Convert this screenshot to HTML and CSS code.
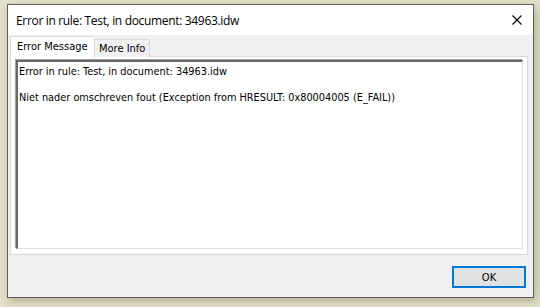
FILE: index.html
```html
<!DOCTYPE html>
<html>
<head>
<meta charset="utf-8">
<link rel="stylesheet" href="styles.css">
</head>
<body>
<div class="window">
  <div class="titlebar">
    <span class="title">Error in rule: Test, in document: 34963.idw</span>
    <svg class="close" width="10" height="10" viewBox="0 0 10 10"><path d="M0.5 0.5 L9.5 9.5 M9.5 0.5 L0.5 9.5" stroke="#000" stroke-width="1.1" fill="none"/></svg>
  </div>
  <div class="content">
    <div class="tabs">
      <div class="tab active">Error Message</div>
      <div class="tab">More Info</div>
    </div>
    <div class="panel">
      <div class="textbox">
        <div class="line">Error in rule: Test, in document: 34963.idw</div>
        <div class="line blank"></div>
        <div class="line">Niet nader omschreven fout (Exception from HRESULT: 0x80004005 (E_FAIL))</div>
      </div>
    </div>
    <div class="footer">
      <button class="ok">OK</button>
    </div>
  </div>
</div>
</body>
</html>
```
FILE: styles.css
```css
html, body {
  margin: 0;
  padding: 0;
}
body {
  background: #e2e0c9;
  width: 540px;
  height: 307px;
  overflow: hidden;
  padding: 4px 0 0 7px;
  box-sizing: border-box;
}
.window {
  width: 527px;
  height: 294px;
  box-sizing: border-box;
  border: 1px solid #5f5f5f;
  background: #f0f0f0;
  box-shadow: 2px 3px 8px rgba(90, 90, 40, 0.35);
  display: flex;
  flex-direction: column;
  font-family: "Open Sans", "Noto Sans", sans-serif;
}
.titlebar {
  height: 30px;
  background: #fff;
  display: flex;
  align-items: center;
  justify-content: space-between;
  padding: 0 11px 0 8px;
  flex-shrink: 0;
}
.title {
  font-size: 12px;
  color: #000;
  letter-spacing: -0.33px;
}
.close {
  display: block;
}
.content {
  display: flex;
  flex-direction: column;
  padding: 2px 5px 0 2px;
  flex: 1;
}
.tabs {
  display: flex;
  align-items: flex-end;
  height: 20px;
  position: relative;
  z-index: 1;
  margin-bottom: -1px;
}
.tab {
  font-family: "DejaVu Sans Condensed", "DejaVu Sans", sans-serif;
  font-size: 11px;
  height: 18px;
  line-height: 18px;
  padding: 0 0 0 4px;
  border: 1px solid #d9d9d9;
  border-bottom: none;
  background: #f0f0f0;
  color: #000;
  box-sizing: border-box;
  width: 56px;
  white-space: nowrap;
}
.tab.active {
  background: #fff;
  height: 21px;
  line-height: 19px;
  width: 84px;
  padding-left: 6px;
  border-right: none;
}
.panel {
  height: 199px;
  box-sizing: border-box;
  border: 1px solid #d9d9d9;
  background: #fff;
  padding: 3px 4px 5px 5px;
}
.textbox {
  height: 100%;
  box-sizing: border-box;
  border-top: 2px solid #696969;
  border-left: 2px solid #696969;
  border-right: 1px solid #e3e3e3;
  border-bottom: 1px solid #e3e3e3;
  box-shadow: -1px -1px 0 #a0a0a0;
  background: #fff;
  padding: 3px 0 0 1px;
  font-family: "DejaVu Sans Condensed", "DejaVu Sans", sans-serif;
  font-size: 10.85px;
  color: #000;
}
.line {
  height: 13px;
  line-height: 13px;
  white-space: nowrap;
}
.footer {
  display: flex;
  justify-content: flex-end;
  padding: 11px 2px 0 0;
}
.ok {
  width: 74px;
  height: 22px;
  box-sizing: border-box;
  border: 2px solid #0078d7;
  background: #e1e1e1;
  font-family: "DejaVu Sans Condensed", "DejaVu Sans", sans-serif;
  font-size: 11px;
  color: #000;
  padding: 0;
  margin: 0;
}
```
